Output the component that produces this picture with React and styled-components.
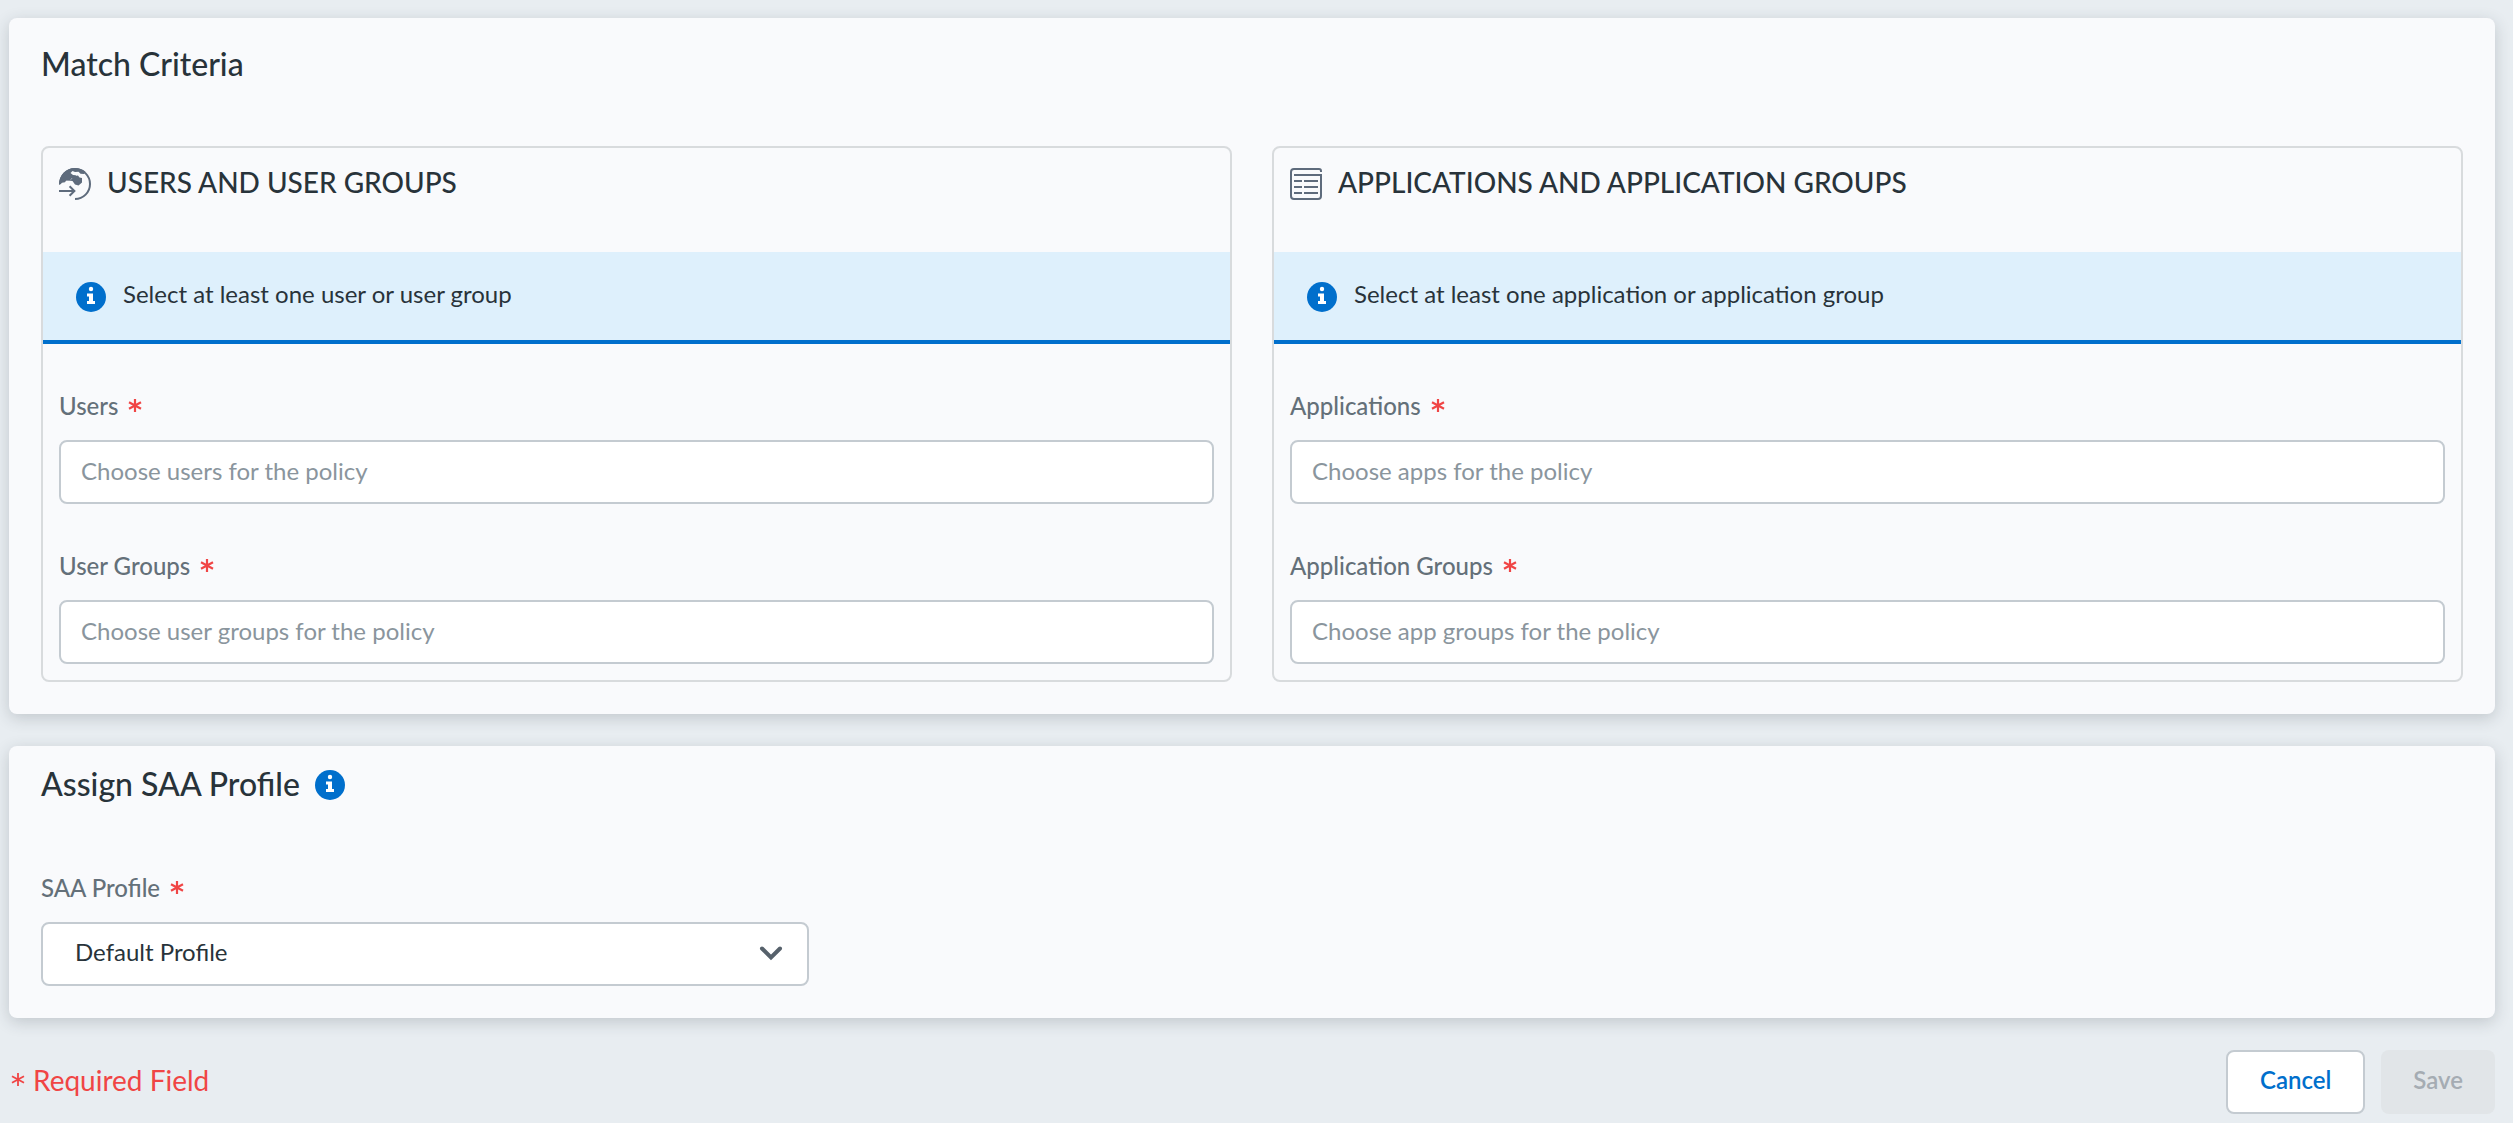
import React, { useState } from "react";
import styled, { createGlobalStyle } from "styled-components";

const GlobalStyle = createGlobalStyle`
  * {
    box-sizing: border-box;
  }

  body {
    margin: 0;
    background: #e8edf1;
    color: #28333a;
    font-family: Lato, "Open Sans", sans-serif;
    font-size: 24px;
    line-height: 28px;
  }
`;

function GlobeIcon() {
  return (
    <svg width="32" height="32" viewBox="0 0 32 32" fill="none" aria-hidden="true">
      <path d="M1 16A15 15 0 1 1 16 31" stroke="#5e6b7c" strokeWidth="2" />
      <path
        d="M0 17C0 7 7 0 16 0c4 0 7.500 1.200 10.500 3.700L25 6l-3.500-.3-2-2-3.500.3-2.500-1-2 2 2.500 2 3 .3-1 2.500-3.500.7-1.500 1.500-4 .8-1 1.500-3 .5-1.500 1.500Z"
        fill="#5e6b7c"
      />
      <path d="M5 11l7 .5 3.500-3.500 3.500-.5 1.500 2 2.500.5 0 4.500-3.500 3-3.500-1-2.500-3.500-4.500-.5Z" fill="#5e6b7c" />
      <path d="M0 23h15M10.600 18.200l4.800 4.800-4.800 4.800" stroke="#5e6b7c" strokeWidth="2" />
    </svg>
  );
}

function AppListIcon() {
  return (
    <svg width="32" height="32" viewBox="0 0 32 32" fill="none" stroke="#5e6b7c" strokeWidth="2" aria-hidden="true">
      <path d="M31 4V3a2 2 0 0 0-2-2H4a3 3 0 0 0-3 3v24a3 3 0 0 0 3 3h24a3 3 0 0 0 3-3V7H4" />
      <path d="M4 13h8M14 13h14M4 19h8M14 19h14M4 25h8M14 25h14" />
    </svg>
  );
}

function InfoIcon() {
  return (
    <svg width="32" height="32" viewBox="0 0 32 32" fill="none" aria-hidden="true">
      <circle cx="16" cy="17" r="15" fill="#006fcc" />
      <circle cx="16" cy="9" r="2.200" fill="#fff" />
      <path d="M12 13.500h6v7.500h2v3h-8v-3h2v-4.500h-2Z" fill="#fff" />
    </svg>
  );
}

function ChevronIcon() {
  return (
    <svg width="24" height="16" viewBox="0 0 24 16" fill="none" aria-hidden="true">
      <path d="M3 2.500l9 9 9-9" stroke="#56616b" strokeWidth="4" strokeLinecap="round" />
    </svg>
  );
}

function RequiredMark({ weight = 2.2 }) {
  return (
    <svg width="14" height="14" viewBox="0 0 14 14" fill="none" aria-hidden="true">
      <path d="M7 0v13M1 3.200l12 6.600M13 3.200l-12 6.600" stroke="#f04545" strokeWidth={weight} />
    </svg>
  );
}

const groups = [
  {
    title: "USERS AND USER GROUPS",
    icon: <GlobeIcon />,
    hint: "Select at least one user or user group",
    fields: [
      { id: "users", label: "Users", placeholder: "Choose users for the policy" },
      { id: "user-groups", label: "User Groups", placeholder: "Choose user groups for the policy" },
    ],
  },
  {
    title: "APPLICATIONS AND APPLICATION GROUPS",
    icon: <AppListIcon />,
    hint: "Select at least one application or application group",
    fields: [
      { id: "apps", label: "Applications", placeholder: "Choose apps for the policy" },
      { id: "app-groups", label: "Application Groups", placeholder: "Choose app groups for the policy" },
    ],
  },
];

function CriteriaPanel({ group }) {
  return (
    <Panel>
      <PanelHeader>
        {group.icon}
        <h3>{group.title}</h3>
      </PanelHeader>
      <Banner>
        <InfoIcon />
        <span>{group.hint}</span>
      </Banner>
      <PanelBody>
        {group.fields.map((field) => (
          <Field key={field.id}>
            <Label htmlFor={field.id}>
              {field.label}
              <RequiredMark />
            </Label>
            <TextInput id={field.id} type="text" placeholder={field.placeholder} />
          </Field>
        ))}
      </PanelBody>
    </Panel>
  );
}

export default function App() {
  const [profile, setProfile] = useState("default");

  return (
    <>
      <GlobalStyle />
      <Page>
        <Card>
          <CardTitle>Match Criteria</CardTitle>
          <PanelGrid>
            {groups.map((group) => (
              <CriteriaPanel key={group.title} group={group} />
            ))}
          </PanelGrid>
        </Card>

        <Card $compact>
          <CardTitle $spaced>
            Assign SAA Profile
            <InfoIcon />
          </CardTitle>
          <Field>
            <Label htmlFor="profile">
              SAA Profile
              <RequiredMark />
            </Label>
            <SelectWrap>
              <Select id="profile" value={profile} onChange={(e) => setProfile(e.target.value)}>
                <option value="default">Default Profile</option>
              </Select>
              <ChevronIcon />
            </SelectWrap>
          </Field>
        </Card>

        <Footer>
          <RequiredNote>
            <RequiredMark weight={1.8} />
            Required Field
          </RequiredNote>
          <Actions>
            <Button type="button">Cancel</Button>
            <Button type="button" disabled>
              Save
            </Button>
          </Actions>
        </Footer>
      </Page>
    </>
  );
}

const Page = styled.main`
  display: flex;
  flex-direction: column;
  gap: 32px;
  padding: 18px 18px 8px 9px;
`;

const Card = styled.section`
  padding: ${(props) => (props.$compact ? "20px" : "28px")} 32px 32px;
  border-radius: 8px;
  background: #f9fafc;
  box-shadow: 0 4px 16px rgba(40, 51, 58, 0.2);
`;

const CardTitle = styled.h2`
  display: flex;
  align-items: center;
  gap: 14px;
  margin: 0 0 ${(props) => (props.$spaced ? "72px" : "64px")};
  font-size: 32px;
  font-weight: 500;
  line-height: 36px;
`;

const PanelGrid = styled.div`
  display: grid;
  grid-template-columns: 1fr 1fr;
  gap: 40px;
`;

const Panel = styled.div`
  border: 2px solid #d8dbdd;
  border-radius: 8px;
`;

const PanelHeader = styled.div`
  display: flex;
  align-items: flex-start;
  gap: 16px;
  padding: 20px 16px 52px;

  h3 {
    margin: 0;
    font-size: 28px;
    font-weight: 500;
    line-height: 28px;
  }
`;

const Banner = styled.div`
  display: flex;
  align-items: flex-start;
  gap: 16px;
  padding: 28px 32px;
  border-bottom: 4px solid #006fcc;
  background: #def0fc;
`;

const PanelBody = styled.div`
  display: flex;
  flex-direction: column;
  gap: 48px;
  padding: 48px 16px 16px;
`;

const Field = styled.div`
  display: flex;
  flex-direction: column;
  gap: 20px;
`;

const Label = styled.label`
  display: flex;
  align-items: center;
  gap: 10px;
  color: #647079;
  font-weight: 500;
`;

const TextInput = styled.input`
  width: 100%;
  height: 64px;
  padding: 0 20px 4px;
  border: 2px solid #c4cbd1;
  border-radius: 8px;
  background: #fff;
  color: inherit;
  font: inherit;

  &::placeholder {
    color: #8a959d;
    opacity: 1;
  }
`;

const SelectWrap = styled.div`
  position: relative;
  max-width: 768px;

  svg {
    position: absolute;
    top: 24px;
    right: 26px;
    pointer-events: none;
  }
`;

const Select = styled.select`
  appearance: none;
  width: 100%;
  height: 64px;
  padding: 0 64px 4px 32px;
  border: 2px solid #c4cbd1;
  border-radius: 8px;
  background: #fff;
  color: inherit;
  font: inherit;
`;

const Footer = styled.footer`
  display: flex;
  align-items: center;
  justify-content: space-between;
`;

const RequiredNote = styled.p`
  display: flex;
  align-items: center;
  gap: 8px;
  margin: 0;
  padding: 0 0 4px 2px;
  color: #f04545;
  font-size: 28px;
  line-height: 32px;
`;

const Actions = styled.div`
  display: flex;
  gap: 16px;
`;

const Button = styled.button`
  height: 64px;
  padding: 0 32px 4px;
  border: 2px solid #c4cbd1;
  border-radius: 8px;
  background: #fff;
  color: #006fcc;
  font: inherit;
  font-weight: 600;
  cursor: pointer;

  &:disabled {
    border: 0;
    background: #e1e5e8;
    color: #a5acb3;
    cursor: default;
  }
`;
